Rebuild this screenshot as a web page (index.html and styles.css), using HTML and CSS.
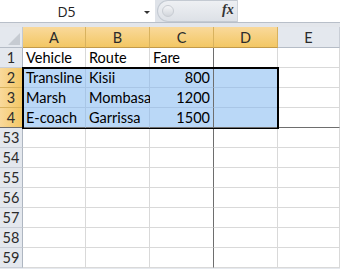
FILE: index.html
```html
<!DOCTYPE html>
<html>
<head>
<meta charset="utf-8">
<link rel="stylesheet" href="styles.css">
</head>
<body>
<div class="app">
  <div class="toolbar">
    <div class="namebox"><span class="name">D5</span><span class="arrow"></span></div>
    <div class="mid">
      <div class="pill"><span class="dot"></span></div>
      <span class="fx">fx</span>
    </div>
    <div class="formula"></div>
  </div>
  <div class="band"></div>
  <div class="sheet">
    <div class="grid">
      <div class="corner"><span class="tri"></span></div>
      <div class="ch sel">A</div>
      <div class="ch sel">B</div>
      <div class="ch sel">C</div>
      <div class="ch sel">D</div>
      <div class="ch">E</div>

      <div class="rh">1</div>
      <div class="c">Vehicle</div>
      <div class="c">Route</div>
      <div class="c fz">Fare</div>
      <div class="c"></div>
      <div class="c"></div>

      <div class="rh sel">2</div>
      <div class="c b">Transline</div>
      <div class="c b">Kisii</div>
      <div class="c b num fz">800</div>
      <div class="c b"></div>
      <div class="c"></div>

      <div class="rh sel">3</div>
      <div class="c b">Marsh</div>
      <div class="c b">Mombasa</div>
      <div class="c b num fz">1200</div>
      <div class="c b"></div>
      <div class="c"></div>

      <div class="rh sel frz">4</div>
      <div class="c b frz">E-coach</div>
      <div class="c b frz">Garrissa</div>
      <div class="c b num fz frz">1500</div>
      <div class="c b frz"></div>
      <div class="c frz"></div>

      <div class="rh">53</div><div class="c"></div><div class="c"></div><div class="c fz"></div><div class="c"></div><div class="c"></div>
      <div class="rh">54</div><div class="c"></div><div class="c"></div><div class="c fz"></div><div class="c"></div><div class="c"></div>
      <div class="rh">55</div><div class="c"></div><div class="c"></div><div class="c fz"></div><div class="c"></div><div class="c"></div>
      <div class="rh">56</div><div class="c"></div><div class="c"></div><div class="c fz"></div><div class="c"></div><div class="c"></div>
      <div class="rh">57</div><div class="c"></div><div class="c"></div><div class="c fz"></div><div class="c"></div><div class="c"></div>
      <div class="rh">58</div><div class="c"></div><div class="c"></div><div class="c fz"></div><div class="c"></div><div class="c"></div>
      <div class="rh">59</div><div class="c"></div><div class="c"></div><div class="c fz"></div><div class="c"></div><div class="c"></div>
    </div>
    <div class="selection"></div>
  </div>
</div>
</body>
</html>
```

FILE: styles.css
```css
* { box-sizing: border-box; }
html, body { margin: 0; padding: 0; background: #e6e9ee; }
body { width: 340px; height: 269px; overflow: hidden; font-family: "Lato", "Noto Sans", sans-serif; }
.app { width: 340px; height: 269px; overflow: hidden; background: #e6e9ee; }

.toolbar { display: flex; height: 23px; border-bottom: 1px solid #b8bfc9; background: #fff; }
.namebox { width: 155px; position: relative; display: flex; align-items: center; justify-content: center; }
.name { font-size: 14px; color: #222; margin-left: -22px; font-family: "Open Sans", sans-serif; }
.arrow { position: absolute; left: 144px; top: 11px; width: 0; height: 0; border-left: 3px solid transparent; border-right: 3px solid transparent; border-top: 3px solid #333; }
.mid { width: 82px; background: #dfe3e9; display: flex; align-items: center; position: relative; }
.pill { width: 80px; height: 22px; margin-left: 2px; border-radius: 11px 0 0 11px; background: linear-gradient(#eef0f3, #dde1e7); border: 1px solid #c4cad2; border-right: none; display: flex; align-items: center; }
.dot { width: 12px; height: 12px; border-radius: 50%; margin-left: 4px; background: linear-gradient(#f4f5f7, #d2d6dc); border: 1px solid #c8ccd2; }
.fx { position: absolute; left: 67px; top: 2px; font-family: "Liberation Serif", serif; font-style: italic; font-weight: bold; font-size: 14px; color: #333; }
.formula { flex: 1; background: #fff; border-left: 1px solid #cfd4da; }

.band { height: 4px; background: #e3e6eb; }

.sheet { position: relative; }
.grid { display: grid; grid-template-columns: 23px 63px 64px 64px 64px 1fr; grid-template-rows: 21px repeat(11, 20px); background: #fff; }

.corner { background: #e4e8ee; border-right: 1px solid #c3c9d1; border-bottom: 1px solid #b5bcc6; position: relative; }
.tri { position: absolute; right: 2px; bottom: 2px; width: 0; height: 0; border-left: 12px solid transparent; border-bottom: 12px solid #c6cbd2; }

.ch { background: #e4e8ee; border-right: 1px solid #c9ced6; border-bottom: 1px solid #b5bcc6; font-size: 14.5px; color: #2b2b2b; display: flex; align-items: center; justify-content: center; padding-top: 1px; }
.ch.sel { background: linear-gradient(#f9d99b, #f3c764); border-right-color: #d8b25e; border-bottom-color: #c29a4a; }
.rh { background: #e4e8ee; border-right: 1px solid #aeb6c1; border-bottom: 1px solid #c9ced6; font-size: 14.5px; color: #2b2b2b; display: flex; align-items: center; justify-content: center; }
.rh.sel { background: linear-gradient(to right, #f9d99b, #f3c764); border-bottom-color: #d8b25e; border-right-color: #c29a4a; }

.c { border-right: 1px solid #d9d9d9; border-bottom: 1px solid #d9d9d9; font-size: 14.5px; color: #000; padding: 0 0 0 3px; display: flex; align-items: center; white-space: nowrap; overflow: visible; }
.c.b { background: #bad8f7; border-right-color: #a9c6e6; border-bottom-color: #a9c6e6; }
.c.num { justify-content: flex-end; padding: 0 3px 0 0; }
.c.fz { border-right: 1px solid #6e6e6e; }
.frz { border-bottom: 1px solid #6e6e6e !important; }

.selection { position: absolute; left: 22px; top: 40px; width: 257px; height: 62px; border: 2px solid #000; border-bottom-width: 1px; pointer-events: none; }
```
